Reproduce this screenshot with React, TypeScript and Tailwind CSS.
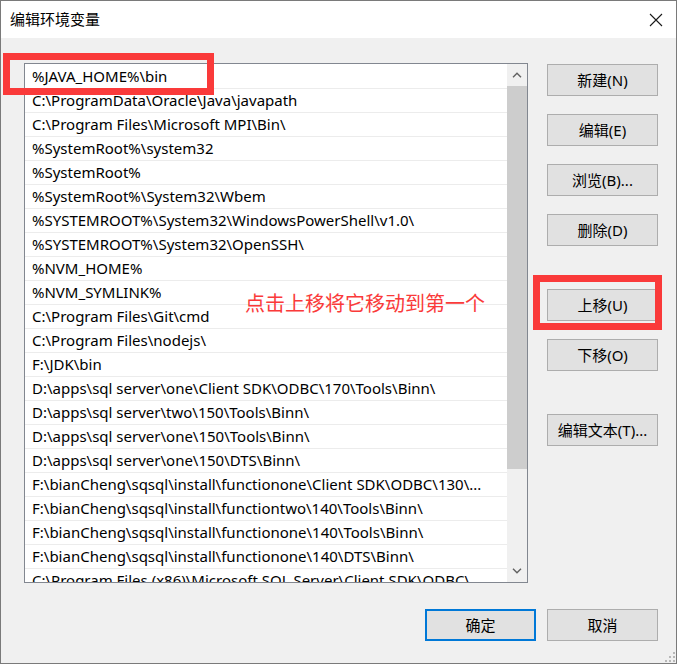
import React from 'react';

const paths = [
  '%JAVA_HOME%\\bin',
  'C:\\ProgramData\\Oracle\\Java\\javapath',
  'C:\\Program Files\\Microsoft MPI\\Bin\\',
  '%SystemRoot%\\system32',
  '%SystemRoot%',
  '%SystemRoot%\\System32\\Wbem',
  '%SYSTEMROOT%\\System32\\WindowsPowerShell\\v1.0\\',
  '%SYSTEMROOT%\\System32\\OpenSSH\\',
  '%NVM_HOME%',
  '%NVM_SYMLINK%',
  'C:\\Program Files\\Git\\cmd',
  'C:\\Program Files\\nodejs\\',
  'F:\\JDK\\bin',
  'D:\\apps\\sql server\\one\\Client SDK\\ODBC\\170\\Tools\\Binn\\',
  'D:\\apps\\sql server\\two\\150\\Tools\\Binn\\',
  'D:\\apps\\sql server\\one\\150\\Tools\\Binn\\',
  'D:\\apps\\sql server\\one\\150\\DTS\\Binn\\',
  'F:\\bianCheng\\sqsql\\install\\functionone\\Client SDK\\ODBC\\130\\...',
  'F:\\bianCheng\\sqsql\\install\\functiontwo\\140\\Tools\\Binn\\',
  'F:\\bianCheng\\sqsql\\install\\functionone\\140\\Tools\\Binn\\',
  'F:\\bianCheng\\sqsql\\install\\functionone\\140\\DTS\\Binn\\',
  'C:\\Program Files (x86)\\Microsoft SQL Server\\Client SDK\\ODBC\\...',
];

function Btn({ label, className = '' }: { label: string; className?: string }) {
  return (
    <button
      className={`w-[111px] h-[32px] shrink-0 bg-[#e1e1e1] border border-[#adadad] text-[15px] text-black flex items-center justify-center ${className}`}
    >
      {label}
    </button>
  );
}

function Chevron({ up }: { up?: boolean }) {
  return (
    <svg width="10" height="6" viewBox="0 0 10 6" fill="none">
      <path
        d={up ? 'M1 5.2 L5 1.2 L9 5.2' : 'M1 0.8 L5 4.8 L9 0.8'}
        stroke="#606060"
        strokeWidth="1.4"
      />
    </svg>
  );
}

export default function App() {
  return (
    <div
      className="relative w-[677px] h-[664px] border border-[#7a7a7a] bg-[#f0f0f0] flex flex-col overflow-hidden"
      style={{ fontFamily: '"Noto Sans", "Noto Sans CJK SC", sans-serif' }}
    >
      {/* 标题栏 */}
      <div className="h-[37px] shrink-0 bg-white flex items-center justify-between pl-[9px] pr-[13px]">
        <span className="text-[15px] text-black" style={{ fontFamily: '"Noto Sans CJK SC", sans-serif' }}>
          编辑环境变量
        </span>
        <svg width="14" height="14" viewBox="0 0 14 14" className="mt-px">
          <path d="M1 1 L13 13 M13 1 L1 13" stroke="#1a1a1a" strokeWidth="1.1" />
        </svg>
      </div>

      {/* 内容区 */}
      <div className="flex-1 flex flex-col pl-[23px] pt-[25px] pr-[18px]">
        <div className="flex">
          {/* 路径列表 */}
          <div className="w-[504px] h-[520px] shrink-0 border border-[#828790] bg-white flex overflow-hidden">
            <div className="flex-1 min-w-0 pt-px">
              {paths.map((p, i) => (
                <div
                  key={i}
                  className="h-[24px] border-b border-[#ececec] pl-[7px] flex items-center whitespace-nowrap overflow-hidden text-[15px] text-black"
                >
                  {p}
                </div>
              ))}
            </div>
            {/* 滚动条 */}
            <div className="w-[20px] shrink-0 bg-[#f0f0f0] flex flex-col">
              <div className="h-[22px] flex items-center justify-center">
                <Chevron up />
              </div>
              <div className="h-[383px] bg-[#cdcdcd]"></div>
              <div className="flex-1"></div>
              <div className="h-[22px] flex items-center justify-center">
                <Chevron />
              </div>
            </div>
          </div>

          {/* 右侧按钮 */}
          <div className="ml-[19px] pt-px flex flex-col">
            <Btn label="新建(N)" />
            <Btn label="编辑(E)" className="mt-[18px]" />
            <Btn label="浏览(B)..." className="mt-[18px]" />
            <Btn label="删除(D)" className="mt-[18px]" />
            <Btn label="上移(U)" className="mt-[43px]" />
            <Btn label="下移(O)" className="mt-[18px]" />
            <Btn label="编辑文本(T)..." className="mt-[43px]" />
          </div>
        </div>

        {/* 底部按钮 */}
        <div className="mt-[26px] flex justify-end gap-[11px]">
          <button className="w-[111px] h-[32px] bg-[#e1e1e1] border-2 border-[#0078d7] text-[15px] text-black flex items-center justify-center">
            确定
          </button>
          <Btn label="取消" />
        </div>
      </div>

      {/* 调整大小手柄 */}
      <svg width="10" height="10" viewBox="0 0 10 10" className="absolute right-[1px] bottom-[1px]">
        <rect x="8" y="0" width="2" height="2" fill="#b8b8b8" />
        <rect x="4" y="4" width="2" height="2" fill="#b8b8b8" />
        <rect x="8" y="4" width="2" height="2" fill="#b8b8b8" />
        <rect x="0" y="8" width="2" height="2" fill="#b8b8b8" />
        <rect x="4" y="8" width="2" height="2" fill="#b8b8b8" />
        <rect x="8" y="8" width="2" height="2" fill="#b8b8b8" />
      </svg>

      {/* 标注 */}
      <div className="absolute left-[2px] top-[52px] w-[211px] h-[42px] border-[7px] border-[#fa3a3a]"></div>
      <div className="absolute left-[532px] top-[274px] w-[129px] h-[55px] border-[7px] border-[#fa3a3a]"></div>
      <div
        className="absolute left-[244px] top-[288px] text-[20px] leading-[28px] text-[#fa3a3a] whitespace-nowrap"
        style={{ fontFamily: '"Noto Sans CJK SC", sans-serif' }}
      >
        点击上移将它移动到第一个
      </div>
    </div>
  );
}
